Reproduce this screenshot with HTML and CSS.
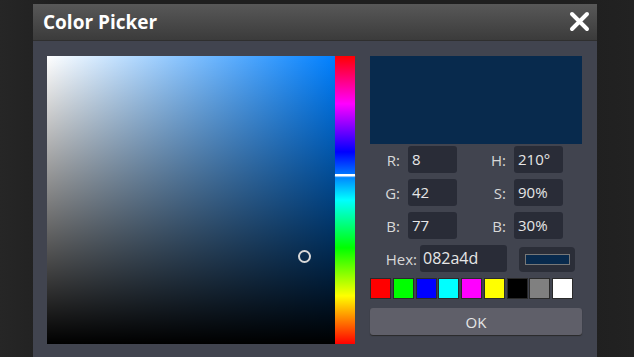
FILE: index.html
```html
<!DOCTYPE html>
<html lang="en">
<head>
    <meta charset="UTF-8">
    <title>Color Picker</title>
    <link rel="stylesheet" href="styles.css">
</head>
<body>
    <div class="dialog">
        <div class="dialog-header">
            <h1>Color Picker</h1>
            <svg class="close-btn" width="21" height="21" viewBox="0 0 21 21"><path d="M3 3 L18 18 M18 3 L3 18" stroke="#fff" stroke-width="4" stroke-linecap="round"/></svg>
        </div>
        <div class="dialog-body">
            <div class="sat-area">
                <div class="sat-cursor"></div>
            </div>
            <div class="hue-bar">
                <div class="hue-marker"></div>
            </div>
            <div class="side-panel">
                <div class="preview"></div>
                <div class="field-row">
                    <label>R:</label><span class="field">8</span>
                    <label class="wide">H:</label><span class="field">210°</span>
                </div>
                <div class="field-row">
                    <label>G:</label><span class="field">42</span>
                    <label class="wide">S:</label><span class="field">90%</span>
                </div>
                <div class="field-row">
                    <label>B:</label><span class="field">77</span>
                    <label class="wide">B:</label><span class="field">30%</span>
                </div>
                <div class="field-row hex-row">
                    <label class="hex-label">Hex:</label><span class="field hex-field">082a4d</span>
                    <div class="current-swatch"><div class="current-color"></div></div>
                </div>
                <div class="swatches">
                    <span class="sw" style="background:#ff0000"></span>
                    <span class="sw" style="background:#00ff00"></span>
                    <span class="sw" style="background:#0000ff"></span>
                    <span class="sw" style="background:#00ffff"></span>
                    <span class="sw" style="background:#ff00ff"></span>
                    <span class="sw" style="background:#ffff00"></span>
                    <span class="sw" style="background:#000000"></span>
                    <span class="sw" style="background:#808080"></span>
                    <span class="sw" style="background:#ffffff"></span>
                </div>
                <button class="ok-btn">OK</button>
            </div>
        </div>
    </div>
</body>
</html>
```

FILE: styles.css
```css
body { margin: 0; padding: 0; background: linear-gradient(to right, #262626, #1f1f1f 10%, #1f1f1f 90%, #222); font-family: "Open Sans", sans-serif; height: 357px; overflow: hidden; }
.dialog { margin: 4px 0 0 33px; width: 564px; height: 353px; background-color: #41444f; }
.dialog-header { height: 36px; border-bottom: 1px solid #2f2f2f; background: linear-gradient(to bottom, #585858, #3b3b3b); display: flex; align-items: center; justify-content: space-between; padding: 0 7px 0 10px; }
.dialog-header h1 { margin: 0; font-size: 19px; font-weight: bold; color: #fff; }
.close-btn { display: block; margin-top: -2px; }
.dialog-body { display: flex; padding: 15px 15px 0 14px; }
.sat-area { position: relative; width: 288px; height: 288px; background: linear-gradient(to top, #000, rgba(0,0,0,0)), linear-gradient(to right, #fff, #0080ff); }
.sat-cursor { position: absolute; left: 251px; top: 194px; width: 9px; height: 9px; border: 2px solid #d8d8d8; border-radius: 50%; }
.hue-bar { position: relative; width: 20px; height: 288px; background: linear-gradient(to bottom, #f00, #f0f 16.6%, #00f 33.3%, #0ff 50%, #0f0 66.6%, #ff0 83.3%, #f00); }
.hue-marker { position: absolute; left: 0; right: 0; top: 118px; height: 2px; background-color: #fff; box-shadow: 0 1px 1px #9ad0ff; }
.side-panel { margin-left: 15px; width: 212px; }
.preview { height: 88px; background-color: #082a4d; margin-bottom: 2px; }
.field-row { display: flex; align-items: center; height: 27px; margin-bottom: 6px; }
.field-row label { width: 30px; padding-right: 8px; text-align: right; color: #d8d8d8; font-size: 15px; }
.field-row label.wide { width: 49px; }
.field { width: 45px; height: 27px; line-height: 27px; padding-left: 4px; background-color: #292c37; border-radius: 3px; color: #e6e6e6; font-size: 15px; }
.hex-row label.hex-label { width: 47px; padding-right: 3px; }
.hex-field { width: 84px; padding-left: 3px; font-size: 16px; }
.current-swatch { margin-left: 12px; margin-top: 2px; width: 56px; height: 25px; background-color: #2b2e38; border-radius: 4px; display: flex; align-items: center; justify-content: center; }
.current-color { width: 43px; height: 9px; border: 1px solid #777; background-color: #082a4d; }
.swatches { display: flex; gap: 1.75px; margin-top: 3px; }
.sw { width: 19px; height: 19px; border: 1px solid #2a2a2a; }
.ok-btn { display: block; width: 212px; height: 27px; margin-top: 9px; border: none; border-radius: 3px; background-color: #5f5f69; color: #e6e6e6; font-family: "Open Sans", sans-serif; font-size: 15px; box-shadow: 0 1px 1px #2a2a2a; padding: 0; }
```
